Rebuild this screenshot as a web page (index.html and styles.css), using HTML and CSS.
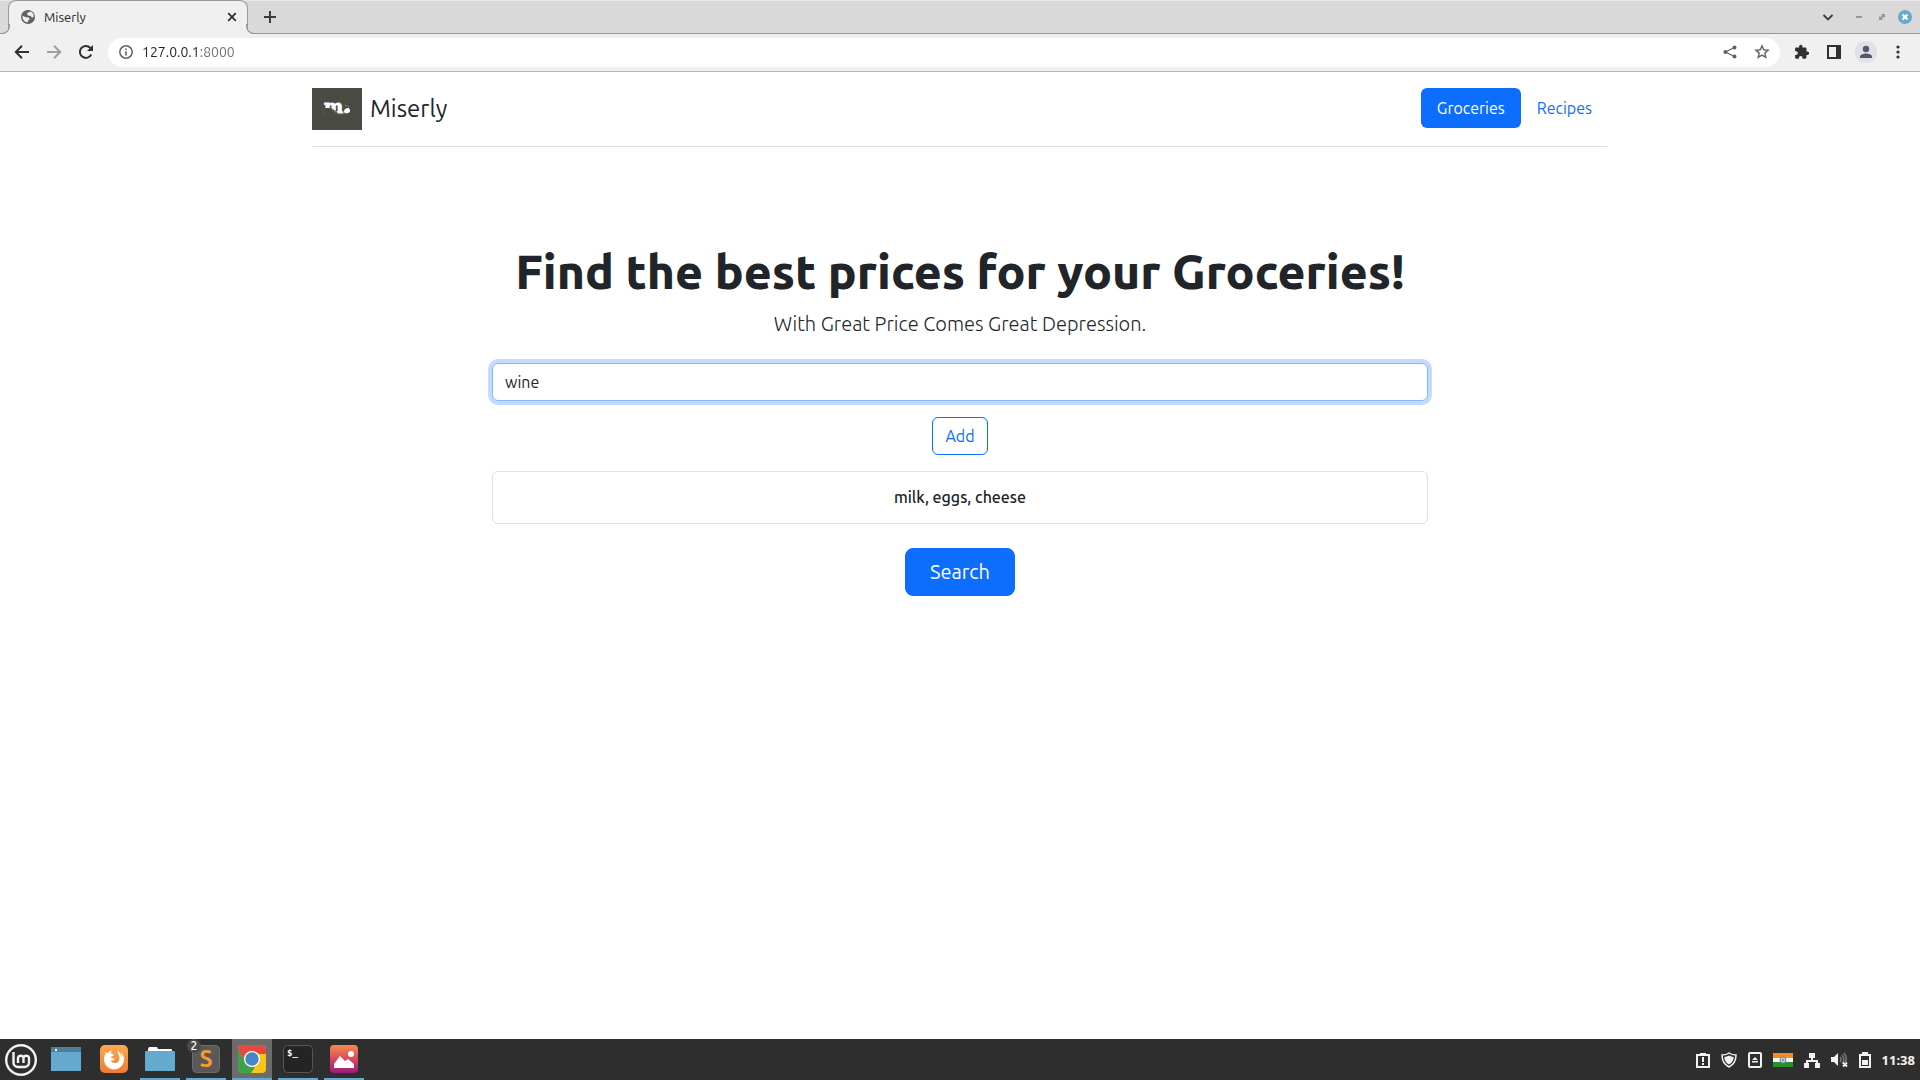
FILE: index.html
```html
<!DOCTYPE html>
<html lang="en">
<head>
    <meta charset="UTF-8">
    <meta name="viewport" content="width=device-width, initial-scale=1.0">
    <title>Miserly</title>
    <link rel="stylesheet" href="styles.css">
</head>
<body>
    <!-- Tab strip -->
    <div class="tab-strip">
        <div class="tab">
            <svg class="tab-icon" width="16" height="16" viewBox="0 0 16 16"><circle cx="8" cy="8" r="7" fill="#5f6368"/><path d="M7.500 3.800l3.500-1.300 2.200 2.300.6 3.200-1.800.6-1.400-1.700-2.400-.4-1.200-1.200zM2.400 6.800l3.600 1.400 2.800.3.900 1.800-1.600 1.200-.5 2.100-2.800-1-2-2.500z" fill="#f0f0f0"/></svg>
            <span class="tab-title">Miserly</span>
            <button class="tab-close" aria-label="Close tab">
                <svg width="10" height="10" viewBox="0 0 10 10" stroke="#303030" stroke-width="1.8"><path d="M1.200 1.200l7.600 7.600M8.800 1.200L1.200 8.800"/></svg>
            </button>
        </div>
        <button class="new-tab" aria-label="New tab">
            <svg width="12" height="12" viewBox="0 0 12 12" stroke="#3c3c3c" stroke-width="2"><path d="M6 0v12M0 6h12"/></svg>
        </button>
        <div class="window-buttons">
            <button class="search-tabs" aria-label="Search tabs">
                <svg width="12" height="12" viewBox="0 0 12 12" fill="none" stroke="#3c3c3c" stroke-width="1.8"><path d="M1.500 4L6 8.500 10.500 4"/></svg>
            </button>
            <button aria-label="Minimize">
                <svg width="8" height="8" viewBox="0 0 8 8"><path d="M1 3h6v2H1z" fill="#9296a0"/></svg>
            </button>
            <button aria-label="Restore">
                <svg width="8" height="8" viewBox="0 0 8 8" fill="#9296a0"><path d="M3 1h4v4L5.800 3.800 4.800 4.800 3.200 3.200 4.200 2.200zM1 3l1.200 1.200 1-1 1.600 1.600-1 1L5 7H1z"/></svg>
            </button>
            <button aria-label="Close">
                <svg width="14" height="14" viewBox="0 0 14 14"><circle cx="7" cy="7" r="7" fill="#66a9d0"/><path d="M4.500 4.500l5 5M9.500 4.500l-5 5" stroke="#fff" stroke-width="2.200"/></svg>
            </button>
        </div>
    </div>

    <!-- Toolbar -->
    <div class="toolbar">
        <button class="tool" aria-label="Back">
            <svg width="16" height="16" viewBox="0 0 16 16" fill="none" stroke="#303030" stroke-width="2"><path d="M15 8H2.500M8 1.800L1.800 8 8 14.200"/></svg>
        </button>
        <button class="tool" aria-label="Forward">
            <svg width="16" height="16" viewBox="0 0 16 16" fill="none" stroke="#a0a0a0" stroke-width="2"><path d="M1 8h12.500M8 1.800L14.200 8 8 14.200"/></svg>
        </button>
        <button class="tool" aria-label="Reload">
            <svg width="16" height="16" viewBox="0 0 16 16" fill="none" stroke="#303030" stroke-width="2"><path d="M13.300 10.500A6 6 0 1 1 12.200 3.700L13.500 5"/><path d="M15 1v6H9z" fill="#303030" stroke="none"/></svg>
        </button>
        <form class="omnibox">
            <button type="button" class="site-info" aria-label="Site information">
                <svg width="16" height="16" viewBox="0 0 16 16" fill="none" stroke="#5f6368"><circle cx="8" cy="8" r="6.200" stroke-width="1.500"/><path d="M8 7.200v4.200M8 4.400v1.600" stroke-width="1.600"/></svg>
            </button>
            <input class="address" type="text" value="127.0.0.1:8000" aria-label="Address">
            <button type="button" class="tool" aria-label="Share">
                <svg width="14" height="14" viewBox="0 0 14 14"><path d="M11.500 2.500L2.500 7l9 4.500" fill="none" stroke="#5f6368" stroke-width="1.300"/><g fill="#5f6368"><circle cx="11.500" cy="2.400" r="2"/><circle cx="2.400" cy="7" r="2"/><circle cx="11.500" cy="11.600" r="2"/></g></svg>
            </button>
            <button type="button" class="tool" aria-label="Bookmark">
                <svg width="16" height="16" viewBox="0 0 16 16" fill="none" stroke="#5f6368" stroke-width="1.400"><path d="M8 1.800l1.700 4 4.400.4-3.300 2.900 1 4.300L8 11.100l-3.800 2.300 1-4.300L1.900 6.200l4.400-.4z"/></svg>
            </button>
        </form>
        <button class="tool" aria-label="Extensions">
            <svg width="16" height="16" viewBox="0 0 16 16"><path d="M13.500 7.500h-1V4.700c0-.7-.6-1.200-1.200-1.200H8.500v-1a1.700 1.700 0 0 0-3.400 0v1H2.300c-.7 0-1.200.5-1.200 1.200v2.600h1a1.800 1.800 0 0 1 0 3.600h-1v2.700c0 .7.5 1.200 1.200 1.200h2.600v-1a1.800 1.800 0 0 1 3.600 0v1h2.700c.7 0 1.200-.5 1.200-1.200v-2.700h1a1.700 1.700 0 0 0 .1-3.400z" fill="#303030"/></svg>
        </button>
        <button class="tool" aria-label="Side panel">
            <svg width="14" height="14" viewBox="0 0 14 14"><path d="M0 0h14v14H0zM2 2v10h7V2z" fill="#303030" fill-rule="evenodd"/></svg>
        </button>
        <button class="tool" aria-label="Profile">
            <svg width="22" height="22" viewBox="0 0 22 22"><circle cx="11" cy="11" r="11" fill="#dee1e6"/><circle cx="11" cy="8" r="3.200" fill="#50596e"/><path d="M5 17v-1.500c0-2 4-3 6-3s6 1 6 3V17z" fill="#50596e"/></svg>
        </button>
        <button class="tool" aria-label="Menu">
            <svg width="4" height="14" viewBox="0 0 4 14" fill="#303030"><circle cx="2" cy="2" r="1.600"/><circle cx="2" cy="7" r="1.600"/><circle cx="2" cy="12" r="1.600"/></svg>
        </button>
    </div>

    <!-- Page -->
    <main class="page">
        <div class="container">
            <header class="site-header">
                <a href="/" class="brand">
                    <svg class="brand-logo" width="50" height="42" viewBox="0 0 50 42"><path d="M0 0h50v42H0z" fill="#4a4b42"/><text x="12" y="25" class="logo-text">m.</text><path d="M12 20h7l5 3 2 3H12z" fill="#4a4b42"/><path d="M18 19c3 4 7 7 13 7M33 17l4 2" fill="none" stroke="#8b8c83" stroke-dasharray="2 1"/><circle cx="35.500" cy="22.500" r="2.500" fill="#fff"/></svg>
                    <span class="brand-name">Miserly</span>
                </a>
                <nav class="nav">
                    <a href="/" class="nav-link active">Groceries</a>
                    <a href="/recipes" class="nav-link">Recipes</a>
                </nav>
            </header>

            <section class="hero">
                <h1>Find the best prices for your Groceries!</h1>
                <p class="lead">With Great Price Comes Great Depression.</p>
                <form class="grocery-form">
                    <input class="form-control" type="text" name="item" value="wine" aria-label="Grocery item">
                    <button type="button" class="btn btn-outline">Add</button>
                    <div class="item-list">milk, eggs, cheese</div>
                    <button type="submit" class="btn btn-search">Search</button>
                </form>
            </section>
        </div>
    </main>

    <!-- Desktop panel -->
    <footer class="panel">
        <button class="start" aria-label="Menu">
            <svg width="32" height="32" viewBox="0 0 32 32" fill="none" stroke="#f2f2f2"><circle cx="16" cy="16" r="14.800" stroke-width="2.400"/><path d="M8.500 8v10.500a4.500 4.500 0 0 0 4.500 4.500h6.500a4.500 4.500 0 0 0 4.500-4.500V14a2.800 2.800 0 0 0-5.500 0v5M18.500 14a2.800 2.800 0 0 0-5.500 0v5" stroke-width="2.400"/></svg>
        </button>
        <div class="launchers">
            <button class="app" aria-label="Show desktop">
                <svg width="30" height="24" viewBox="0 0 30 24"><path d="M0 0h30v24H0z" fill="#66a9cf"/><path d="M0 0h30v5H0z" fill="#4b7f9c"/><path d="M4 2h2v2H4z" fill="#fff"/></svg>
            </button>
            <button class="app" aria-label="Firefox">
                <svg width="28" height="28" viewBox="0 0 28 28"><defs><linearGradient id="fox" x2="0" y2="1"><stop stop-color="#ffa94e"/><stop offset="1" stop-color="#f07b32"/></linearGradient></defs><rect width="28" height="28" rx="5" fill="url(#fox)"/><path d="M5 7c0 1 .2 1.500.5 2C4 11 3.900 13 4 15c.5 5.500 5 9.500 10 9.500 5.500 0 10-4.500 10-10 0-3-1-5.500-3.500-7.500 1 1.500 1.500 3 1.500 5-.6-2.500-2.500-4.500-4-6.500-1.500 2 1.500 4 1.500 7.500 0 3-2 5-4.500 5-2 0-3.500-.8-4.500-2.500 2 .6 3.500-.5 4.500-1.500-.6-1-2.500-.5-4-1 0-1.500 2-2 3-3-.5-1-2-1-3-1.500C10.500 7 11.500 6 12.500 5.500 10.500 5.500 9 6.500 8 8 7 7.500 6 8 5 7z" fill="#fff"/></svg>
            </button>
        </div>
        <div class="tasks">
            <button class="app running" aria-label="Files">
                <svg width="30" height="26" viewBox="0 0 30 26"><path d="M3 3l1-2h8l1 2h13a1 1 0 0 1 1 1v4H3z" fill="#fff"/><path d="M1 5h28a1 1 0 0 1 1 1v18a1 1 0 0 1-1 1H1a1 1 0 0 1-1-1V6a1 1 0 0 1 1-1z" fill="#66a9cf"/></svg>
            </button>
            <button class="app running" aria-label="Sublime Text">
                <svg width="28" height="28" viewBox="0 0 28 28"><rect x=".5" y=".5" width="27" height="27" rx="4" fill="#595959" stroke="#6b6b6b"/><text x="14" y="22" text-anchor="middle" class="sublime-letter">S</text></svg>
                <span class="badge">2</span>
            </button>
            <button class="app running current" aria-label="Chrome">
                <svg width="28" height="28" viewBox="0 0 28 28"><defs><clipPath id="tile"><rect width="28" height="28" rx="4"/></clipPath></defs><g clip-path="url(#tile)"><path d="M0 0h28v28H0z" fill="#f9c518"/><path d="M0 0h28v9H14l-7 8L0 5z" fill="#e44a40"/><path d="M0 4l7.500 13L14 22l3 0-4 6H0z" fill="#3fa14c"/></g><circle cx="14" cy="14" r="8" fill="#fff"/><circle cx="14" cy="14" r="6.700" fill="#4287c8"/></svg>
            </button>
            <button class="app running" aria-label="Terminal">
                <svg width="30" height="28" viewBox="0 0 30 28"><rect x=".5" y=".5" width="29" height="27" rx="4" fill="#242424" stroke="#565656"/><text x="4" y="11" class="prompt">$_</text></svg>
            </button>
            <button class="app running" aria-label="Image viewer">
                <svg width="28" height="28" viewBox="0 0 28 28"><defs><linearGradient id="sky" x2="0" y2="1"><stop stop-color="#f58c4f"/><stop offset=".55" stop-color="#d4435f"/><stop offset="1" stop-color="#9b1b78"/></linearGradient></defs><rect width="28" height="28" rx="4" fill="url(#sky)"/><circle cx="21" cy="9" r="3" fill="#fff"/><path d="M4 23v-4l6-8 5 5 3-2 6 5v4z" fill="#fff"/></svg>
            </button>
        </div>
        <div class="tray">
            <svg width="14" height="16" viewBox="0 0 14 16"><path d="M1 3h12v12H1z" fill="none" stroke="#f2f2f2" stroke-width="2"/><path d="M4 3V1h6v2M6 5h2v5H6zM6 11h2v2H6z" fill="#f2f2f2"/></svg>
            <svg width="16" height="16" viewBox="1 0 16 16"><path d="M9 1c2 1.500 4.500 2 7 2 0 6-2 9.500-7 12C4 12.500 2 9 2 3c2.500 0 5-.5 7-2z" fill="none" stroke="#f2f2f2" stroke-width="1.500"/><path d="M9 3.500c1.500.9 3 1.300 4.700 1.400-.2 3.600-1.700 6-4.700 7.600-3-1.600-4.500-4-4.700-7.600C6 4.800 7.500 4.400 9 3.500z" fill="#f2f2f2"/></svg>
            <svg width="14" height="16" viewBox="0 0 14 16"><rect x="1" y="1" width="12" height="14" rx="1" fill="none" stroke="#f2f2f2" stroke-width="2"/><path d="M7 5l3 3H4zM4 9h6v1.500H4z" fill="#f2f2f2"/></svg>
            <svg width="20" height="14" viewBox="0 0 20 14"><path d="M0 0h20v5H0z" fill="#f28c24"/><path d="M0 5h20v4H0z" fill="#f2f2f2"/><path d="M0 9h20v5H0z" fill="#2c8f22"/><circle cx="10" cy="7" r="3" fill="#c3cede" stroke="#6683b4"/><circle cx="10" cy="7" r="1" fill="#6683b4"/></svg>
            <svg width="16" height="16" viewBox="0 0 16 16" fill="#f2f2f2"><path d="M5 1h6v5H5zM0 11h5v5H0zM11 11h5v5h-5zM7 6h2v2h5v3h-2v-1H4v1H2V8h5z"/></svg>
            <svg width="17" height="16" viewBox="0 0 17 16"><path d="M0 5h3l4-4v13l-4-4H0z" fill="#f2f2f2"/><path d="M9 5q2 2.500 0 5M11 3q3.500 4.500 0 9M13 1q4 5.500 1 9" fill="none" stroke="#777" stroke-width="1.500"/><path d="M12 10.500l4 4M16 10.500l-4 4" stroke="#f2f2f2" stroke-width="1.800"/></svg>
            <svg width="12" height="16" viewBox="0 0 12 16"><path d="M3 2V0h6v2h3v14H0V2zM2 4v10h8V4z" fill="#f2f2f2" fill-rule="evenodd"/><path d="M3 8h6v5H3z" fill="#f2f2f2"/></svg>
            <time class="clock">11:38</time>
        </div>
    </footer>
</body>
</html>
```
FILE: styles.css
```css
* {
    box-sizing: border-box;
    margin: 0;
    padding: 0;
}
body {
    font-family: 'Ubuntu', 'Noto Sans', sans-serif;
    font-size: 16px;
    line-height: 24px;
    color: #212529;
    background-color: #fff;
    display: flex;
    flex-direction: column;
    min-height: 100vh;
}
button {
    font: inherit;
    background: none;
    border: none;
}
a {
    text-decoration: none;
}
svg {
    display: block;
    flex-shrink: 0;
}

/* Tab strip */
.tab-strip {
    display: flex;
    align-items: center;
    height: 34px;
    padding-left: 8px;
    background-color: #d9d9d9;
    border-top: 1px solid #e8e8e8;
    border-bottom: 1px solid #999;
}
.tab {
    position: relative;
    display: flex;
    align-items: center;
    align-self: stretch;
    width: 240px;
    margin: -1px 0;
    padding: 0 10px 1px 11px;
    background-color: #f0f0f0;
    border: 1px solid #999;
    border-bottom: none;
    border-radius: 8px 8px 0 0;
    font-size: 13px;
}
/* curved feet on both sides of the tab */
.tab::before,
.tab::after {
    content: "";
    position: absolute;
    bottom: 0;
    width: 9px;
    height: 9px;
    border-bottom: 1px solid #999;
    background-color: transparent;
}
.tab::before {
    left: -9px;
    border-right: 1px solid #999;
    border-bottom-right-radius: 8px;
    box-shadow: 3px 3px 0 #f0f0f0;
    clip-path: inset(0 -1px 0 0);
}
.tab::after {
    right: -9px;
    border-left: 1px solid #999;
    border-bottom-left-radius: 8px;
    box-shadow: -3px 3px 0 #f0f0f0;
    clip-path: inset(0 0 0 -1px);
}
.tab-icon {
    margin-right: 8px;
}
.tab-title {
    flex: 1;
}
.tab-close,
.new-tab,
.tool,
.site-info,
.window-buttons button {
    display: flex;
    align-items: center;
    justify-content: center;
}
.new-tab {
    width: 28px;
    height: 28px;
    margin-left: 8px;
}
.window-buttons {
    display: flex;
    align-items: center;
    gap: 8px;
    margin-left: auto;
    padding-right: 8px;
}
.window-buttons button {
    width: 15px;
    height: 16px;
}
.window-buttons .search-tabs {
    margin-right: 8px;
}

/* Toolbar */
.toolbar {
    display: flex;
    align-items: center;
    padding: 4px 6px;
    background-color: #f0f0f0;
    border-bottom: 1px solid #b6b6b6;
}
.tool,
.site-info {
    height: 28px;
    padding-bottom: 2px;
}
.tool {
    width: 32px;
}
.omnibox {
    flex: 1;
    display: flex;
    align-items: center;
    height: 29px;
    margin: 0 6px;
    padding: 0 2px 0 10px;
    background-color: #fff;
    border-radius: 15px;
}
.address {
    flex: 1;
    margin-left: 8px;
    padding-bottom: 2px;
    border: none;
    outline: none;
    font-family: inherit;
    font-size: 14px;
    color: transparent;
    background: linear-gradient(to right, #202124 56px, #6b6f73 56px);
    -webkit-background-clip: text;
    background-clip: text;
}

/* Page */
.page {
    flex: 1;
}
.container {
    max-width: 1320px;
    margin: 0 auto;
    padding: 0 12px;
}
.site-header {
    display: flex;
    justify-content: space-between;
    padding: 16px 0;
    border-bottom: 1px solid #dee2e6;
}
.brand {
    display: flex;
    align-items: center;
    color: #212529;
}
.brand-logo {
    margin-right: 8px;
}
.brand-name {
    font-size: 24px;
}
.logo-text {
    font-family: 'DejaVu Serif', serif;
    font-size: 18px;
    font-weight: bold;
    fill: #fff;
    stroke: #fff;
}
.nav {
    display: flex;
    align-items: flex-start;
}
.nav-link {
    padding: 8px 16px;
    border-radius: 6px;
    color: #0d6efd;
}
.nav-link.active {
    background-color: #0d6efd;
    color: #fff;
}
.hero {
    margin: 48px 0;
    padding: 48px 24px;
    text-align: center;
}
h1 {
    font-size: 48px;
    font-weight: 800;
    line-height: 56px;
    margin-bottom: 10px;
}
.lead {
    font-size: 20px;
    font-weight: 300;
    line-height: 30px;
    margin-bottom: 24px;
}
.grocery-form {
    display: flex;
    flex-direction: column;
    align-items: center;
    gap: 16px;
    width: 75%;
    margin: 0 auto;
}
.form-control {
    width: 100%;
    height: 38px;
    padding: 6px 12px;
    font: inherit;
    color: #212529;
    border: 1px solid #86b7fe;
    border-radius: 6px;
    outline: none;
    box-shadow: 0 0 0 4px rgba(13, 110, 253, 0.25);
}
.btn {
    padding: 6px 12px;
    border: 1px solid #0d6efd;
    border-radius: 6px;
    cursor: pointer;
}
.btn-outline {
    color: #0d6efd;
}
.item-list {
    width: 100%;
    padding: 13px 16px 14px;
    border: 1px solid #dee2e6;
    border-radius: 6px;
    font-weight: 500;
}
.btn-search {
    margin-top: 8px;
    padding: 8px 24px;
    border-radius: 8px;
    background-color: #0d6efd;
    color: #fff;
    font-size: 20px;
    line-height: 30px;
}

/* Desktop panel */
.panel {
    display: flex;
    height: 41px;
    background-color: #2e2e2e;
    color: #f2f2f2;
}
.start {
    padding: 0 9px 0 5px;
}
.launchers {
    display: flex;
    gap: 8px;
    margin-right: 6px;
}
.tasks {
    display: flex;
    gap: 6px;
}
.app {
    position: relative;
    display: flex;
    align-items: center;
    justify-content: center;
    width: 40px;
    border-bottom: 2px solid transparent;
}
.app.running {
    border-bottom-color: #66a9cf;
}
.app.current {
    background-color: #6c6c6c;
}
.badge {
    position: absolute;
    top: 0;
    left: 1px;
    width: 14px;
    height: 14px;
    border-radius: 50%;
    background-color: #4a4a4a;
    color: #fff;
    font-size: 12px;
    font-weight: 500;
    line-height: 14px;
}
.sublime-letter {
    font-family: 'Ubuntu', 'Noto Sans', sans-serif;
    font-size: 23px;
    font-weight: 600;
    fill: #f59a2e;
}
.prompt {
    font-family: 'DejaVu Sans Mono', monospace;
    font-size: 9px;
    font-weight: bold;
    fill: #fff;
}
.tray {
    display: flex;
    align-items: center;
    gap: 11px;
    margin-left: auto;
    padding-right: 5px;
}
.clock {
    font-family: 'Noto Sans', sans-serif;
    font-size: 13px;
    font-weight: 700;
}
```
